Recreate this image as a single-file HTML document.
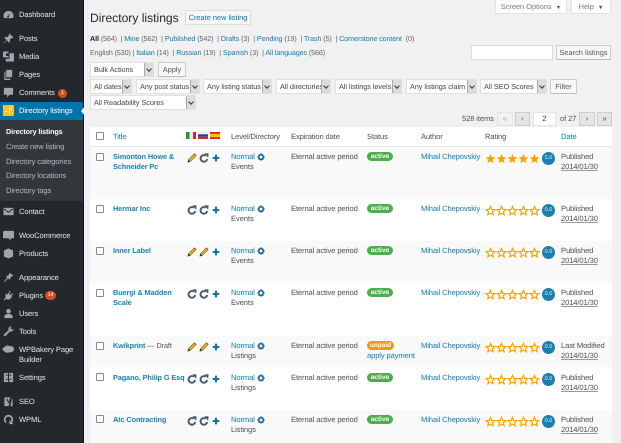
<!DOCTYPE html>
<html><head><meta charset="utf-8"><title>Directory listings</title>
<style>
*{box-sizing:border-box}
html,body{margin:0;padding:0;width:621px;height:443px;overflow:hidden;background:#f1f1f1}
body{font-family:"Liberation Sans",sans-serif;color:#4c5055;position:relative;text-rendering:geometricPrecision}
#w{position:absolute;left:0;top:0;width:621px;height:443px;overflow:hidden;filter:blur(.35px)}
.t{position:absolute;white-space:nowrap;line-height:10px;font-size:7.6px;letter-spacing:-.12px}
a,.l{color:#0f7bb0}
.tt{color:#1a7fb2;font-weight:bold;font-size:7.35px}
.b{position:absolute}
.m{color:#e4e6e8;font-size:7.6px}
.s{color:#b4b9be}
.ic{position:absolute;left:3px;width:11px;height:11px;fill:#a0a5aa}
.sel{position:absolute;background:#fff;border:1px solid #e0e0e0;height:15px;line-height:13px;font-size:7.3px;padding-left:3px;white-space:nowrap;overflow:hidden;color:#3c4146;letter-spacing:-.05px}
.sel:after{content:"";position:absolute;right:0;top:0;width:8px;height:13px;background:#dcdcdc;border-left:1px solid #aaa}
.sel:before{content:"";position:absolute;z-index:1;right:2px;top:4px;width:3px;height:3px;border:solid #333;border-width:0 1px 1px 0;transform:rotate(45deg)}
.btn{position:absolute;background:#f7f7f7;border:1px solid #ccc;border-bottom-color:#bbb;height:15px;line-height:13px;font-size:7.4px;text-align:center;color:#555;white-space:nowrap;border-radius:1px}
.pg{position:absolute;top:112px;height:14px;background:#e5e5e5;border:1px solid #ccc;color:#0073aa;font-size:8px;line-height:11px;text-align:center}
.row{position:absolute;left:90px;width:522px}
.cb{position:absolute;left:6px;width:8px;height:8px;background:#fff;border:1px solid #8c8c8c;border-radius:1px}
.pill{position:absolute;left:277px;width:26px;height:9px;border-radius:5px;background:#4cae4c;color:#fff;font-size:6.5px;font-weight:bold;line-height:9px;text-align:center}
.bd{position:absolute;left:451px;width:13px;height:13px;border-radius:50%;background:#1a80b0;color:#dfeef6;font-size:5.5px;line-height:13px;text-align:center}
.u{text-decoration:underline;text-decoration-color:#999}
svg.i{position:absolute;overflow:visible}
</style></head><body><div id="w">
<svg width="0" height="0" style="position:absolute">
<defs>
<symbol id="star" viewBox="0 0 24 24"><polygon points="12,2 15,9 22.5,9.6 16.8,14.6 18.6,22 12,18 5.4,22 7.2,14.6 1.5,9.6 9,9" fill="#ffa200"/></symbol>
<symbol id="ostar" viewBox="0 0 24 24"><polygon points="12,3 14.7,9.6 21.5,10.2 16.2,14.7 17.9,21.3 12,17.8 6.1,21.3 7.8,14.7 2.5,10.2 9.3,9.6" fill="#fff" stroke="#ffa200" stroke-width="2.6"/></symbol>
<symbol id="pen" viewBox="0 0 12 12"><path d="M1 11l.8-3L8.500 1.300l2.200 2.200L4 10.200z" fill="#e8b21e" stroke="#7a5a20" stroke-width=".7"/><path d="M8.500 1.300l2.200 2.200 .8-.8-2.200-2.200z" fill="#c8503c"/><path d="M1 11l.8-3 2.200 2.200z" fill="#333"/></symbol>
<symbol id="ref" viewBox="0 0 12 12"><path d="M9.800 7.300A4 4 0 1 1 8.200 3.200" fill="none" stroke="#47586a" stroke-width="2.300"/><path d="M6.500 .3l5 .2-.5 5.300z" fill="#47586a"/></symbol>
<symbol id="plus" viewBox="0 0 12 12"><path d="M4.500 1h3v3.500H11v3H7.500V11h-3V7.500H1v-3h3.500z" fill="#0f73a8"/></symbol>
<symbol id="gear" viewBox="0 0 12 12"><circle cx="6" cy="6" r="3.300" fill="none" stroke="#0f5f90" stroke-width="2.200"/><path d="M5 .5h2v2H5zM5 9.500h2v2H5zM.5 5h2v2h-2zM9.500 5h2v2h-2zM1.800 3l1.400-1.400 1.200 1.200L3 4.200zM9 7.800l1.400 1.400L9 10.600 7.800 9.400zM10.200 3L8.800 1.600 7.600 2.800 9 4.200zM3 7.800L1.600 9.200 3 10.600l1.200-1.200z" fill="#0f5f90"/></symbol>
</defs></svg>

<!-- sidebar -->
<div class="b" style="left:0;top:0;width:84px;height:443px;background:#23282d;border-right:1px solid #14171a"></div>
<div class="b" style="left:0;top:120px;width:83px;height:81px;background:#32373c"></div>
<div class="b" style="left:0;top:102px;width:83px;height:18px;background:#0073aa"></div>
<div class="b" style="left:81px;top:106px;width:0;height:0;border:5px solid transparent;border-right:4px solid #f1f1f1;border-left:0"></div>

<svg class="ic" style="top:9px" viewBox="0 0 12 12"><path d="M6 2a5.500 5.500 0 0 0-5.500 5.500c0 1 .3 1.800.7 2.500h9.600c.4-.7.700-1.500.700-2.500A5.500 5.500 0 0 0 6 2zM6.500 8.500a1 1 0 1 1-1-1l2-3z"/></svg>
<div class="t m" style="left:19px;top:10px">Dashboard</div>
<svg class="ic" style="top:33px" viewBox="0 0 12 12"><path d="M7 .5l4.500 4.500-1.200.7-.8-.4-2 2 .2 2.200-1 1L4.300 8 1 11.500l-.5-.5L4 7.700 1.500 5.300l1-1 2.200.2 2-2-.4-.8z"/></svg>
<div class="t m" style="left:19px;top:34px">Posts</div>
<svg class="ic" style="top:51px" viewBox="0 0 12 12"><path d="M0 .5h6v2H4.500a1.500 1.500 0 1 0 0 3H6v1.500H0zM7 2.500h5v9H3V8.500h4z"/></svg>
<div class="t m" style="left:19px;top:52px">Media</div>
<svg class="ic" style="top:69px" viewBox="0 0 12 12"><path d="M3.500 1H10v8H3.500zM1.500 3h1.200v7.500H8V12H1.500z"/></svg>
<div class="t m" style="left:19px;top:70px">Pages</div>
<svg class="ic" style="top:87px" viewBox="0 0 12 12"><path d="M1 1h10v7.500H7L4.500 11.500V8.500H1z"/></svg>
<div class="t m" style="left:19px;top:88px">Comments</div>
<div class="b" style="left:58px;top:89px;width:9px;height:9px;border-radius:50%;background:#d54e21;color:#fff;font-size:5.500px;line-height:9px;text-align:center">1</div>
<svg class="ic" style="top:105px;fill:#f5c518" viewBox="0 0 12 12"><path d="M0 0h12v12H0z"/><path d="M2 7h3M7 3v6M9 3v3" stroke="#fff" fill="none"/></svg>
<div class="t" style="left:19px;top:106px;color:#fff">Directory listings</div>
<div class="t" style="left:6px;top:127px;color:#fff;font-weight:bold;font-size:7.2px">Directory listings</div>
<div class="t s" style="left:6px;top:142px">Create new listing</div>
<div class="t s" style="left:6px;top:157px">Directory categories</div>
<div class="t s" style="left:6px;top:171px">Directory locations</div>
<div class="t s" style="left:6px;top:186px">Directory tags</div>
<svg class="ic" style="top:206px" viewBox="0 0 12 12"><path d="M.5 2h11v8H.500z"/><path d="M1 3l5 4 5-4" stroke="#23282d" fill="none"/></svg>
<div class="t m" style="left:19px;top:207px">Contact</div>
<svg class="ic" style="top:230px" viewBox="0 0 12 12"><path d="M1 1h10a1 1 0 0 1 1 1v7H8l1 2.500L5.500 9H1a1 1 0 0 1-1-1V2z"/></svg>
<div class="t m" style="left:19px;top:231px">WooCommerce</div>
<svg class="ic" style="top:248px" viewBox="0 0 12 12"><path d="M6 .5l5 2.200v6.600L6 11.500 1 9.300V2.700z"/></svg>
<div class="t m" style="left:19px;top:249px">Products</div>
<svg class="ic" style="top:272px" viewBox="0 0 12 12"><path d="M7 1l4.500 3-3 1.500-1 3-2-1.500L1.500 11 1 10.500l3.500-4.500L3 4.500l3-.5z"/></svg>
<div class="t m" style="left:19px;top:273px">Appearance</div>
<svg class="ic" style="top:290px" viewBox="0 0 12 12"><path d="M7.500 1l1 1-2 2 1.500 1.500 2-2 1 1-2 2 1 1L8 9.500C6.500 11 4 10.500 3.500 9.500L1.500 11.500 1 10l2-2c-.8-1.200-.5-3 .5-4l1 1z"/></svg>
<div class="t m" style="left:19px;top:291px">Plugins</div>
<div class="b" style="left:45px;top:291px;width:11px;height:9px;border-radius:5px;background:#d54e21;color:#fff;font-size:5.500px;line-height:9px;text-align:center">14</div>
<svg class="ic" style="top:308px" viewBox="0 0 12 12"><circle cx="6" cy="3.500" r="2.500"/><path d="M1.500 11V9c0-1.500 2-2.500 4.500-2.500S10.500 7.500 10.500 9v2z"/></svg>
<div class="t m" style="left:19px;top:309px">Users</div>
<svg class="ic" style="top:326px" viewBox="0 0 12 12"><path d="M11.500 3a3 3 0 0 1-4 3L3 10.800a1.200 1.200 0 0 1-1.800-1.700L6 4.500a3 3 0 0 1 3.500-4L8 2.200 9.800 4z"/></svg>
<div class="t m" style="left:19px;top:327px">Tools</div>
<svg class="ic" style="top:344px;left:2px;width:13px" viewBox="0 0 14 12"><path d="M3 3c2-2 4-1.500 5-.5 2-1 5 .5 5 3 0 3-3 4-5 3.500-2 1-5 .5-6-1.500-1-.5-2-1.500-1.500-2.500.5-1 1.500-1 2.500-2z"/></svg>
<div class="t m" style="left:19px;top:345px">WPBakery Page</div>
<div class="t m" style="left:19px;top:355px">Builder</div>
<svg class="ic" style="top:372px" viewBox="0 0 12 12"><path d="M1 1h10v10H1z"/><path d="M3 3.500h2M3 8h2M7 3.500h2M7 8h2M6 1v10" stroke="#23282d" fill="none" stroke-width="1.200"/></svg>
<div class="t m" style="left:19px;top:373px">Settings</div>
<svg class="ic" style="top:396px" viewBox="0 0 12 12"><path d="M1.500 1.500h7L6 11H1.500z"/><path d="M4 3l2 4 3-6" stroke="#23282d" fill="none"/><path d="M8 11h2.500V3L9.800 3z"/></svg>
<div class="t m" style="left:19px;top:397px">SEO</div>
<svg class="ic" style="top:414px" viewBox="0 0 12 12"><path d="M6 1a5 5 0 0 0-3 9l1-1.500A3.200 3.200 0 1 1 8.500 8L7 6.500v4.500h4.500L9.800 9.300A5 5 0 0 0 6 1z"/></svg>
<div class="t m" style="left:19px;top:415px">WPML</div>

<!-- top -->
<div class="btn" style="left:495px;top:-1px;width:72px;background:#fff;border-color:#e3e3e3;color:#72777c">Screen Options &nbsp;<span style="font-size:5.500px;color:#555">▼</span></div>
<div class="btn" style="left:571px;top:-1px;width:40px;background:#fff;border-color:#e3e3e3;color:#72777c">Help &nbsp;<span style="font-size:5.500px;color:#555">▼</span></div>

<div class="t" style="left:90px;top:13px;font-size:12.100px;color:#23282d;letter-spacing:0">Directory listings</div>
<div class="btn" style="left:185px;top:10px;width:66px;background:#f7f7f7;color:#0073aa;border-color:#ddd">Create new listing</div>

<div class="t" style="left:90px;top:34px;color:#666;font-size:7.200px"><b style="color:#222">All</b> (564) &nbsp;| <a>Mine</a> (562) &nbsp;| <a>Published</a> (542) &nbsp;| <a>Drafts</a> (3) &nbsp;| <a>Pending</a> (19) &nbsp;| <a>Trash</a> (5) &nbsp;| <a>Cornerstone content</a> &nbsp;(0)</div>
<div class="t" style="left:90px;top:48px;color:#666;font-size:7.200px">English (530) | <a>Italian</a> (14) &nbsp;| <a>Russian</a> (19) &nbsp;| <a>Spanish</a> (3) &nbsp;| <a>All languages</a> (566)</div>

<div class="b" style="left:471px;top:45px;width:82px;height:15px;background:#fff;border:1px solid #ddd"></div>
<div class="btn" style="left:556px;top:45px;width:55px">Search listings</div>

<div class="sel" style="left:90px;top:62px;width:64px">Bulk Actions</div>
<div class="btn" style="left:158px;top:62px;width:28px">Apply</div>
<div class="sel" style="left:90px;top:79px;width:42px">All dates</div>
<div class="sel" style="left:136px;top:79px;width:64px">Any post status</div>
<div class="sel" style="left:203px;top:79px;width:69px">Any listing status</div>
<div class="sel" style="left:276px;top:79px;width:55px">All directories</div>
<div class="sel" style="left:335px;top:79px;width:67px">All listings levels</div>
<div class="sel" style="left:406px;top:79px;width:71px">Any listings claim</div>
<div class="sel" style="left:480px;top:79px;width:67px">All SEO Scores</div>
<div class="btn" style="left:550px;top:79px;width:27px">Filter</div>
<div class="sel" style="left:90px;top:95px;width:106px">All Readability Scores</div>

<div class="t" style="left:462px;top:114px;color:#555">528 items</div>
<div class="pg" style="left:497px;width:16px;color:#aaa;background:#f1f1f1;border-color:#e3e3e3">«</div>
<div class="pg" style="left:515px;width:15px">‹</div>
<div class="pg" style="left:533px;width:23px;background:#fff;border-color:#e5e5e5;color:#333;font-size:7.500px">2</div>
<div class="t" style="left:560px;top:114px;color:#555">of 27</div>
<div class="pg" style="left:579px;width:16px">›</div>
<div class="pg" style="left:597px;width:15px">»</div>

<!-- table -->
<div class="b" style="left:90px;top:127px;width:522px;height:316px;background:#fff;border-bottom:0"></div>
<div class="b" style="left:90px;top:146px;width:522px;height:1px;background:#e4e4e4"></div>
<div class="cb" style="left:96px;top:132px"></div>
<div class="t l" style="left:113px;top:132px">Title</div>
<svg class="i" style="left:186px;top:132px" width="34" height="8" viewBox="0 0 34 8">
<rect x="0" y="0" width="3.500" height="7" fill="#1e9a3c"/><rect x="3.500" y="0" width="3.500" height="7" fill="#eee"/><rect x="7" y="0" width="3" height="7" fill="#d8232a"/>
<rect x="12" y="0" width="10" height="2.300" fill="#eee"/><rect x="12" y="2.300" width="10" height="2.400" fill="#1c3fb0"/><rect x="12" y="4.700" width="10" height="2.300" fill="#d8232a"/>
<rect x="24" y="0" width="10" height="7" fill="#d8232a"/><rect x="24" y="1.800" width="10" height="3.400" fill="#f5c400"/></svg>
<div class="t" style="left:231px;top:132px">Level/Directory</div>
<div class="t" style="left:291px;top:132px">Expiration date</div>
<div class="t" style="left:367px;top:132px">Status</div>
<div class="t" style="left:421px;top:132px">Author</div>
<div class="t" style="left:485px;top:132px">Rating</div>
<div class="t l" style="left:561px;top:132px">Date</div>

<!-- Row 1 -->
<div class="row" style="top:147px;height:52px;background:#f9f9f9"></div>
<div class="cb" style="left:96px;top:153px"></div>
<div class="t tt" style="left:113px;top:152px">Simonton Howe &amp;</div>
<div class="t tt" style="left:113px;top:162px">Schneider Pc</div>
<svg class="i" style="left:187px;top:153px" width="10" height="10"><use href="#pen"/></svg>
<svg class="i" style="left:199px;top:153px" width="10" height="10"><use href="#ref"/></svg>
<svg class="i" style="left:212px;top:154px" width="8" height="8"><use href="#plus"/></svg>
<div class="t l" style="left:231px;top:152px">Normal</div>
<svg class="i" style="left:257px;top:153px" width="8" height="8"><use href="#gear"/></svg>
<div class="t" style="left:231px;top:162px">Events</div>
<div class="t" style="left:291px;top:152px">Eternal active period</div>
<div class="pill" style="left:367px;top:152px">active</div>
<div class="t l" style="left:421px;top:152px">Mihail Chepovskiy</div>
<svg class="i" style="left:485px;top:153px" width="56" height="11"><use href="#star" width="11" height="11"/><use href="#star" x="11" width="11" height="11"/><use href="#star" x="22" width="11" height="11"/><use href="#star" x="33" width="11" height="11"/><use href="#star" x="44" width="11" height="11"/></svg>
<div class="bd" style="left:542px;top:152px">5.0</div>
<div class="t" style="left:561px;top:152px">Published</div>
<div class="t u" style="left:561px;top:162px">2014/01/30</div>

<!-- Row 2 -->
<div class="cb" style="left:96px;top:205px"></div>
<div class="t tt" style="left:113px;top:204px">Hermar Inc</div>
<svg class="i" style="left:187px;top:205px" width="10" height="10"><use href="#ref"/></svg>
<svg class="i" style="left:199px;top:205px" width="10" height="10"><use href="#ref"/></svg>
<svg class="i" style="left:212px;top:206px" width="8" height="8"><use href="#plus"/></svg>
<div class="t l" style="left:231px;top:204px">Normal</div>
<svg class="i" style="left:257px;top:205px" width="8" height="8"><use href="#gear"/></svg>
<div class="t" style="left:231px;top:214px">Events</div>
<div class="t" style="left:291px;top:204px">Eternal active period</div>
<div class="pill" style="left:367px;top:204px">active</div>
<div class="t l" style="left:421px;top:204px">Mihail Chepovskiy</div>
<svg class="i" style="left:485px;top:205px" width="56" height="11"><use href="#ostar" width="11" height="11"/><use href="#ostar" x="11" width="11" height="11"/><use href="#ostar" x="22" width="11" height="11"/><use href="#ostar" x="33" width="11" height="11"/><use href="#ostar" x="44" width="11" height="11"/></svg>
<div class="bd" style="left:542px;top:204px">0.0</div>
<div class="t" style="left:561px;top:204px">Published</div>
<div class="t u" style="left:561px;top:214px">2014/01/30</div>

<!-- Row 3 -->
<div class="row" style="top:241px;height:42px;background:#f9f9f9"></div>
<div class="cb" style="left:96px;top:247px"></div>
<div class="t tt" style="left:113px;top:246px">Inner Label</div>
<svg class="i" style="left:187px;top:247px" width="10" height="10"><use href="#pen"/></svg>
<svg class="i" style="left:199px;top:247px" width="10" height="10"><use href="#pen"/></svg>
<svg class="i" style="left:212px;top:248px" width="8" height="8"><use href="#plus"/></svg>
<div class="t l" style="left:231px;top:246px">Normal</div>
<svg class="i" style="left:257px;top:247px" width="8" height="8"><use href="#gear"/></svg>
<div class="t" style="left:231px;top:256px">Events</div>
<div class="t" style="left:291px;top:246px">Eternal active period</div>
<div class="pill" style="left:367px;top:246px">active</div>
<div class="t l" style="left:421px;top:246px">Mihail Chepovskiy</div>
<svg class="i" style="left:485px;top:247px" width="56" height="11"><use href="#ostar" width="11" height="11"/><use href="#ostar" x="11" width="11" height="11"/><use href="#ostar" x="22" width="11" height="11"/><use href="#ostar" x="33" width="11" height="11"/><use href="#ostar" x="44" width="11" height="11"/></svg>
<div class="bd" style="left:542px;top:246px">0.0</div>
<div class="t" style="left:561px;top:246px">Published</div>
<div class="t u" style="left:561px;top:256px">2014/01/30</div>

<!-- Row 4 -->
<div class="cb" style="left:96px;top:289px"></div>
<div class="t tt" style="left:113px;top:288px">Buergi &amp; Madden</div>
<div class="t tt" style="left:113px;top:298px">Scale</div>
<svg class="i" style="left:187px;top:289px" width="10" height="10"><use href="#ref"/></svg>
<svg class="i" style="left:199px;top:289px" width="10" height="10"><use href="#ref"/></svg>
<svg class="i" style="left:212px;top:290px" width="8" height="8"><use href="#plus"/></svg>
<div class="t l" style="left:231px;top:288px">Normal</div>
<svg class="i" style="left:257px;top:289px" width="8" height="8"><use href="#gear"/></svg>
<div class="t" style="left:231px;top:298px">Events</div>
<div class="t" style="left:291px;top:288px">Eternal active period</div>
<div class="pill" style="left:367px;top:288px">active</div>
<div class="t l" style="left:421px;top:288px">Mihail Chepovskiy</div>
<svg class="i" style="left:485px;top:289px" width="56" height="11"><use href="#ostar" width="11" height="11"/><use href="#ostar" x="11" width="11" height="11"/><use href="#ostar" x="22" width="11" height="11"/><use href="#ostar" x="33" width="11" height="11"/><use href="#ostar" x="44" width="11" height="11"/></svg>
<div class="bd" style="left:542px;top:288px">0.0</div>
<div class="t" style="left:561px;top:288px">Published</div>
<div class="t u" style="left:561px;top:298px">2014/01/30</div>

<!-- Row 5 -->
<div class="row" style="top:336px;height:31px;background:#f9f9f9"></div>
<div class="cb" style="left:96px;top:342px"></div>
<div class="t tt" style="left:113px;top:341px">Kwikprint <span style="color:#555;font-weight:normal">— Draft</span></div>
<svg class="i" style="left:187px;top:342px" width="10" height="10"><use href="#pen"/></svg>
<svg class="i" style="left:199px;top:342px" width="10" height="10"><use href="#pen"/></svg>
<svg class="i" style="left:212px;top:343px" width="8" height="8"><use href="#plus"/></svg>
<div class="t l" style="left:231px;top:341px">Normal</div>
<svg class="i" style="left:257px;top:342px" width="8" height="8"><use href="#gear"/></svg>
<div class="t" style="left:231px;top:351px">Listings</div>
<div class="t" style="left:291px;top:341px">Eternal active period</div>
<div class="pill" style="left:367px;top:341px;width:27px;background:#f7941d">unpaid</div>
<div class="t l" style="left:367px;top:351px">apply payment</div>
<div class="t l" style="left:421px;top:341px">Mihail Chepovskiy</div>
<svg class="i" style="left:485px;top:342px" width="56" height="11"><use href="#ostar" width="11" height="11"/><use href="#ostar" x="11" width="11" height="11"/><use href="#ostar" x="22" width="11" height="11"/><use href="#ostar" x="33" width="11" height="11"/><use href="#ostar" x="44" width="11" height="11"/></svg>
<div class="bd" style="left:542px;top:341px">0.0</div>
<div class="t" style="left:561px;top:341px">Last Modified</div>
<div class="t u" style="left:561px;top:351px">2014/01/30</div>

<!-- Row 6 -->
<div class="cb" style="left:96px;top:373px"></div>
<div class="t tt" style="left:113px;top:373px">Pagano, Philip G Esq</div>
<svg class="i" style="left:187px;top:374px" width="10" height="10"><use href="#ref"/></svg>
<svg class="i" style="left:199px;top:374px" width="10" height="10"><use href="#ref"/></svg>
<svg class="i" style="left:212px;top:375px" width="8" height="8"><use href="#plus"/></svg>
<div class="t l" style="left:231px;top:373px">Normal</div>
<svg class="i" style="left:257px;top:374px" width="8" height="8"><use href="#gear"/></svg>
<div class="t" style="left:231px;top:383px">Listings</div>
<div class="t" style="left:291px;top:373px">Eternal active period</div>
<div class="pill" style="left:367px;top:373px">active</div>
<div class="t l" style="left:421px;top:373px">Mihail Chepovskiy</div>
<svg class="i" style="left:485px;top:374px" width="56" height="11"><use href="#ostar" width="11" height="11"/><use href="#ostar" x="11" width="11" height="11"/><use href="#ostar" x="22" width="11" height="11"/><use href="#ostar" x="33" width="11" height="11"/><use href="#ostar" x="44" width="11" height="11"/></svg>
<div class="bd" style="left:542px;top:373px">0.0</div>
<div class="t" style="left:561px;top:373px">Published</div>
<div class="t u" style="left:561px;top:383px">2014/01/30</div>

<!-- Row 7 -->
<div class="row" style="top:410px;height:33px;background:#f9f9f9"></div>
<div class="cb" style="left:96px;top:415px"></div>
<div class="t tt" style="left:113px;top:415px">Atc Contracting</div>
<svg class="i" style="left:187px;top:416px" width="10" height="10"><use href="#ref"/></svg>
<svg class="i" style="left:199px;top:416px" width="10" height="10"><use href="#ref"/></svg>
<svg class="i" style="left:212px;top:417px" width="8" height="8"><use href="#plus"/></svg>
<div class="t l" style="left:231px;top:415px">Normal</div>
<svg class="i" style="left:257px;top:416px" width="8" height="8"><use href="#gear"/></svg>
<div class="t" style="left:231px;top:425px">Listings</div>
<div class="t" style="left:291px;top:415px">Eternal active period</div>
<div class="pill" style="left:367px;top:415px">active</div>
<div class="t l" style="left:421px;top:415px">Mihail Chepovskiy</div>
<svg class="i" style="left:485px;top:416px" width="56" height="11"><use href="#ostar" width="11" height="11"/><use href="#ostar" x="11" width="11" height="11"/><use href="#ostar" x="22" width="11" height="11"/><use href="#ostar" x="33" width="11" height="11"/><use href="#ostar" x="44" width="11" height="11"/></svg>
<div class="bd" style="left:542px;top:415px">0.0</div>
<div class="t" style="left:561px;top:415px">Published</div>
<div class="t u" style="left:561px;top:425px">2014/01/30</div>
</div></body></html>
